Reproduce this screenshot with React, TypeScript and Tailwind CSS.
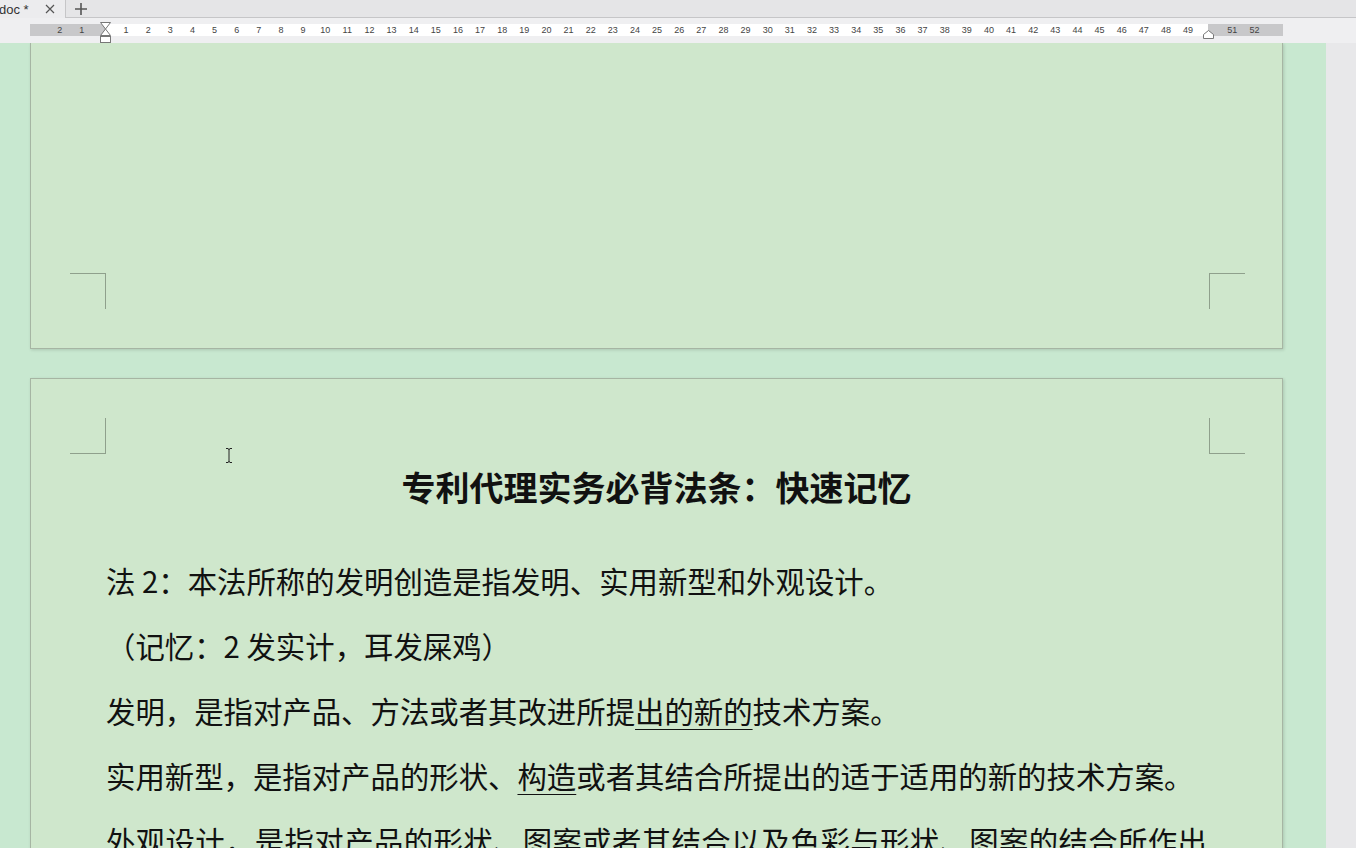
import React from "react";

const ticks = [-2, -1, ...Array.from({ length: 49 }, (_, i) => i + 1), 51, 52];

function CornerMark({ side }: { side: string }) {
  const cls: Record<string, string> = {
    tl: "border-b border-r",
    tr: "border-b border-l",
    bl: "border-t border-r",
    br: "border-t border-l",
  };
  return <div className={`w-[36px] h-[36px] border-[#8fa08c] ${cls[side]}`} />;
}

function Ruler() {
  return (
    <div className="h-[25px] bg-[#efeff1] pl-[30px] pt-[6px]">
      <div className="relative w-[1253px] h-[12px] flex">
        <div className="w-[75px] h-full bg-[#c8c8ca]" />
        <div className="w-[1103px] h-full bg-white" />
        <div className="w-[75px] h-full bg-[#c8c8ca]" />
        {ticks.map((n) => (
          <span
            key={n}
            className="absolute top-[-1px] -translate-x-1/2 text-[9px] leading-[14px] text-[#444] font-['Liberation_Sans',sans-serif]"
            style={{ left: 73.9 + 22.125 * n }}
          >
            {Math.abs(n)}
          </span>
        ))}
        {/* left indent marker */}
        <svg className="absolute left-[70px] top-[-2px]" width="11" height="21" viewBox="0 0 11 21">
          <path d="M0.5 0.5 H10.5 L5.5 7 L10.5 13.5 H0.5 L5.5 7 Z" fill="#fff" stroke="#777" />
          <rect x="0.5" y="14.5" width="10" height="6" fill="#fff" stroke="#777" />
        </svg>
        {/* right indent marker */}
        <svg className="absolute left-[1173px] top-[6px]" width="11" height="9" viewBox="0 0 11 9">
          <path d="M0.5 8.5 V4.5 L5.5 0.5 L10.5 4.5 V8.5 Z" fill="#fff" stroke="#777" />
        </svg>
      </div>
    </div>
  );
}

export default function App() {
  return (
    <div className="w-[1356px] h-[848px] overflow-hidden flex flex-col bg-[#e8e8ea] font-['Noto_Sans_CJK_SC',sans-serif]">
      {/* tab strip */}
      <div className="h-[18px] flex items-stretch bg-[#e5e5e7]">
        <div className="w-[66px] flex items-center justify-between pr-[10px] bg-[#ececee] border-r border-[#c6c6c8] text-[13px] leading-none text-[#333] font-['Liberation_Sans',sans-serif]">
          <span className="-ml-[1px]">doc *</span>
          <svg width="10" height="10" viewBox="0 0 10 10">
            <path d="M1 1 L9 9 M9 1 L1 9" stroke="#555" strokeWidth="1.2" />
          </svg>
        </div>
        <div className="flex-1 flex items-center border-b border-[#c6c6c8] pl-[9px]">
          <svg width="12" height="12" viewBox="0 0 12 12">
            <path d="M6 0 V12 M0 6 H12" stroke="#555" strokeWidth="1.6" />
          </svg>
        </div>
      </div>

      <Ruler />

      <div className="flex-1 flex min-h-0">
        <div className="w-[1326px] bg-[#c8e8d0] pl-[30px] overflow-hidden">
          {/* page 1 (bottom part) */}
          <div className="w-[1253px] h-[306px] bg-[#cfe7cc] border-x border-b border-[#a6b5a3] shadow-[1px_1px_3px_rgba(0,0,0,0.15)] flex flex-col justify-end pb-[39px] pl-[39px] pr-[37px]">
            <div className="flex justify-between">
              <CornerMark side="bl" />
              <CornerMark side="br" />
            </div>
          </div>

          {/* page 2 */}
          <div className="relative mt-[29px] w-[1253px] h-[600px] bg-[#cfe7cc] border border-[#a6b5a3] shadow-[1px_1px_3px_rgba(0,0,0,0.15)] pt-[39px] text-[#111]">
            <div className="flex justify-between pl-[39px] pr-[37px]">
              <CornerMark side="tl" />
              <CornerMark side="tr" />
            </div>

            <svg className="absolute left-[194px] top-[69px]" width="8" height="15" viewBox="0 0 8 15">
              <path d="M1 0.5 H3 Q4 1 4 2 V13 Q4 14 3 14.5 H1 M7 0.5 H5 Q4 1 4 2 M4 13 Q4 14 5 14.5 H7" fill="none" stroke="#222" strokeWidth="1" />
            </svg>

            <h1 className="mt-[13px] text-center text-[34px] leading-[40px] font-bold">
              专利代理实务必背法条：快速记忆
            </h1>

            <div className="mt-[41px] px-[75px] text-[29.4px] leading-[65px]">
              <p>法 2：本法所称的发明创造是指发明、实用新型和外观设计。</p>
              <p>（记忆：2 发实计，耳发屎鸡）</p>
              <p>
                发明，是指对产品、方法或者其改进所提
                <span className="underline underline-offset-[6px] decoration-1">出的新的</span>
                技术方案。
              </p>
              <p>
                实用新型，是指对产品的形状、
                <span className="underline underline-offset-[6px] decoration-1">构造</span>
                或者其结合所提出的适于适用的新的技术方案。
              </p>
              <p className="text-justify">
                外观设计，是指对产品的形状、图案或者其结合以及色彩与形状、图案的结合所作出的富有美感并适于工业应用的新设计。
              </p>
            </div>
          </div>
        </div>
        <div className="flex-1 bg-[#e8e8ea]" />
      </div>
    </div>
  );
}
